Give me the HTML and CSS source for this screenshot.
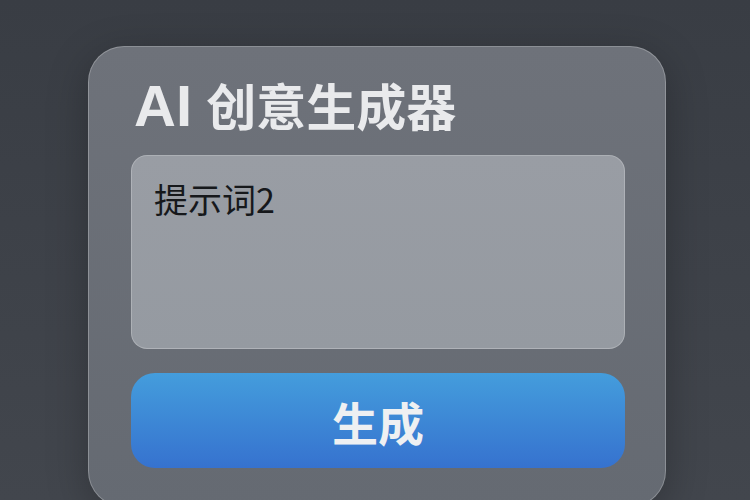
FILE: index.html
```html
<!DOCTYPE html>
<html lang="zh-CN">
<head>
    <meta charset="UTF-8">
    <meta name="viewport" content="width=device-width, initial-scale=1.0">
    <title>AI 创意生成器</title>
    <link rel="stylesheet" href="styles.css">
</head>
<body>
    <div class="generator-card">
        <h1><span class="title-latin">AI</span> 创意生成器</h1>
        <textarea id="prompt" class="prompt-input">提示词2</textarea>
        <button class="generate-btn" id="generateBtn">生成</button>
    </div>
</body>
</html>
```

FILE: styles.css
```css
body {
    font-family: 'Noto Sans CJK SC', sans-serif;
    background: linear-gradient(180deg, #393d44 0%, #42464d 100%);
    margin: 0;
    height: 100vh;
    overflow: hidden;
    display: flex;
    justify-content: center;
    padding: 46px 0 0 4px; /* card sits a touch right of centre */
    box-sizing: border-box;
}

/* Glassy card */
.generator-card {
    width: 578px;
    box-sizing: border-box;
    padding: 29px 40px 38px 42px;
    border-radius: 36px;
    border: 1px solid rgba(255, 255, 255, 0.25);
    background: linear-gradient(180deg, #6e727a 0%, #656a72 100%);
    box-shadow: 0 10px 40px rgba(0, 0, 0, 0.25);
    display: flex;
    flex-direction: column;
    flex-shrink: 0;
    align-self: flex-start;
}

.generator-card h1 {
    margin: 0 0 21px 3px;
    font-family: 'Noto Sans CJK SC', sans-serif;
    font-size: 50px;
    font-weight: 700;
    line-height: 56px;
    color: #e9eaec;
}

.title-latin {
    font-family: 'Liberation Sans', sans-serif;
    font-size: 58px;
    margin-right: 3px;
}

.prompt-input {
    height: 194px;
    box-sizing: border-box;
    padding: 23px 22px;
    border-radius: 16px;
    border: 1px solid rgba(255, 255, 255, 0.22);
    background: linear-gradient(180deg, #999da4 0%, #959aa1 100%);
    color: #16181b;
    font-family: 'Noto Sans CJK SC', sans-serif;
    font-size: 34px;
    line-height: 40px;
    resize: none;
    outline: none;
}

.generate-btn {
    margin-top: 24px;
    height: 95px;
    border: none;
    border-radius: 24px;
    background: linear-gradient(180deg, #449ddc 0%, #3672cf 100%);
    color: #eef0f2;
    font-family: 'Noto Sans CJK SC', sans-serif;
    font-size: 46px;
    font-weight: 700;
    cursor: pointer;
}
```
